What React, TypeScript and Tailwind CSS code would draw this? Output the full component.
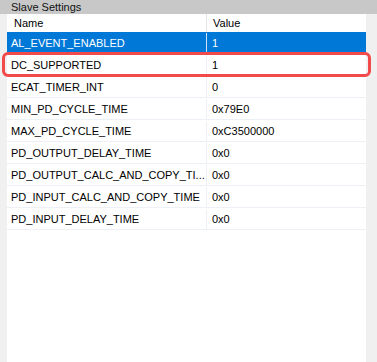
import React from "react";

const rows: [string, string][] = [
  ["AL_EVENT_ENABLED", "1"],
  ["DC_SUPPORTED", "1"],
  ["ECAT_TIMER_INT", "0"],
  ["MIN_PD_CYCLE_TIME", "0x79E0"],
  ["MAX_PD_CYCLE_TIME", "0xC3500000"],
  ["PD_OUTPUT_DELAY_TIME", "0x0"],
  ["PD_OUTPUT_CALC_AND_COPY_TI...", "0x0"],
  ["PD_INPUT_CALC_AND_COPY_TIME", "0x0"],
  ["PD_INPUT_DELAY_TIME", "0x0"],
];

export default function App() {
  return (
    <div
      className="relative w-[377px] h-[362px] flex flex-col bg-white text-[11px] text-black overflow-hidden"
      style={{ fontFamily: '"Liberation Sans", Arial, sans-serif' }}
    >
      <div className="h-[14px] shrink-0 bg-[#c8c8c8] flex items-center pl-[11px] leading-none text-[#111]">
        Slave Settings
      </div>
      <div className="flex flex-1">
        <div className="w-[7px] bg-[#f0f0f0]" />
        <div className="flex-1 bg-white flex flex-col">
          <div className="h-[18px] flex">
            <div className="w-[200px] pl-[7px] flex items-center border-r border-[#e5e5e5]">Name</div>
            <div className="flex-1 pl-[6px] flex items-center">Value</div>
          </div>
          {rows.map(([n, v], i) => {
            const sel = i === 0;
            return (
              <div
                key={n}
                className={
                  sel
                    ? "h-[22px] flex bg-[#0078d7] text-white pt-[1px]"
                    : "h-[22px] flex border-b border-[#edf0f5] pt-[1px]"
                }
              >
                <div
                  className={
                    sel
                      ? "w-[200px] pl-[4px] flex items-center border-r border-[#cfe3f5] whitespace-nowrap overflow-hidden"
                      : "w-[200px] pl-[4px] flex items-center border-r border-[#edf0f5] whitespace-nowrap overflow-hidden"
                  }
                >
                  {n}
                </div>
                <div className="flex-1 pl-[5px] flex items-center">{v}</div>
              </div>
            );
          })}
        </div>
        <div className="w-[11px] bg-[#f0f0f0]" />
      </div>
      <div className="absolute left-[2px] top-[52px] w-[369px] h-[25px] border-[3px] border-[#f24a4a] rounded-[6px]" />
    </div>
  );
}
